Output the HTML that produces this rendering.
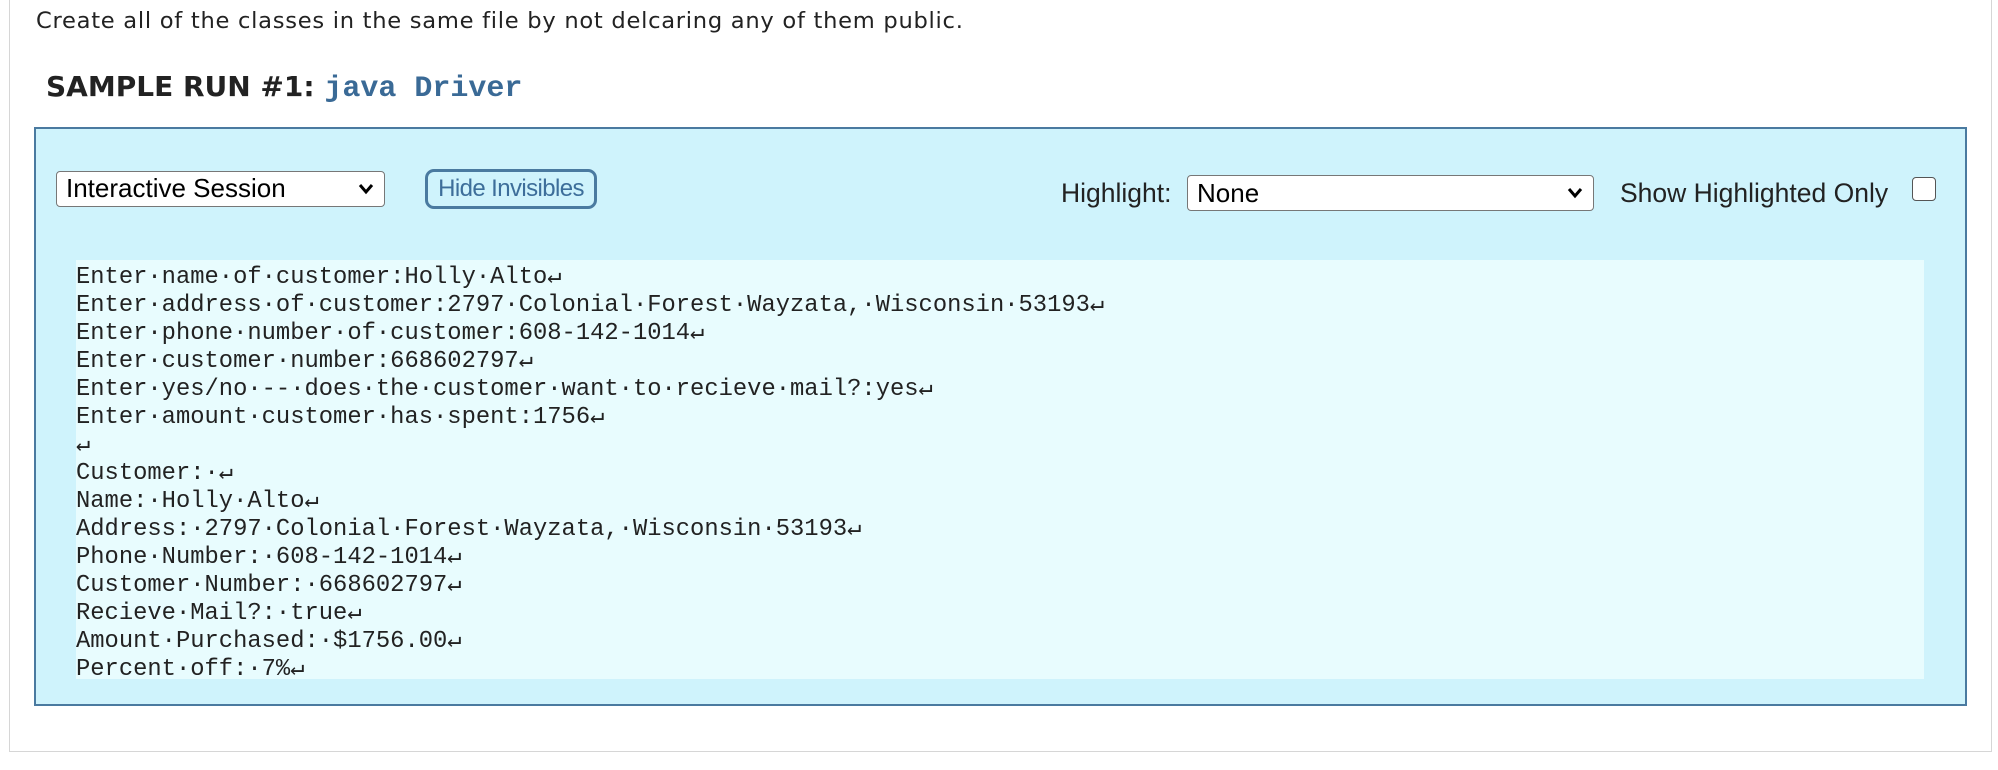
<!DOCTYPE html>
<html><head><meta charset="utf-8"><style>
html,body{margin:0;padding:0;background:#fff;width:1998px;height:770px;overflow:hidden}
.card{position:absolute;left:9px;top:-2px;width:1981px;height:753px;border:1px solid #d6d6d6;border-top:none}
.t1{position:absolute;left:36px;top:8px;font:22.6px "DejaVu Sans",sans-serif;color:#222;letter-spacing:0.72px;white-space:nowrap}
.t2{position:absolute;left:46px;top:70px;font:bold 28px "DejaVu Sans",sans-serif;color:#222;white-space:nowrap}
.t2 code{font:bold 30px "Liberation Mono",monospace;color:#3a6a96}
.box{position:absolute;left:34px;top:127px;width:1929px;height:575px;background:#cff3fc;border:2px solid #4a7aa0}
.sel{position:absolute;background:#fff;border:1.5px solid #777;border-radius:4px;box-sizing:border-box;font:26px "Liberation Sans",sans-serif;color:#000;padding-left:9px;white-space:nowrap}
.sel svg{position:absolute;right:10px;top:50%;margin-top:-7px}
.btn{position:absolute;left:425px;top:169px;width:172px;height:40px;box-sizing:border-box;border:3px solid #4a7aa0;border-radius:9px;font:24px "Liberation Sans",sans-serif;color:#3d6e9a;text-align:center;line-height:33px;background:#cff3fc;letter-spacing:-0.6px;white-space:nowrap}
.lbl{position:absolute;font:26.5px "Liberation Sans",sans-serif;color:#222;white-space:nowrap}
.cb{position:absolute;left:1912px;top:177px;width:24px;height:24px;box-sizing:border-box;border:1.5px solid #555;border-radius:4px;background:#fff}
.code{position:absolute;left:76px;top:260px;width:1848px;height:419px;background:#e8fcfe;margin:0;font:23.8px "Liberation Mono",monospace;line-height:28px;color:#222;padding-top:4px;box-sizing:border-box;white-space:pre}
</style></head><body>
<div class="card"></div>
<div class="t1">Create all of the classes in the same file by not delcaring any of them public.</div>
<div class="t2">SAMPLE RUN #1: <code>java Driver</code></div>
<div class="box"></div>
<div class="sel" style="left:56px;top:171px;width:329px;height:36px;line-height:33px">Interactive Session<svg width="16" height="14" viewBox="0 0 16 14"><path d="M2 3 L8 10 L14 3" stroke="#000" stroke-width="3" fill="none"/></svg></div>
<div class="btn">Hide Invisibles</div>
<div class="lbl" style="left:1061px;top:178px">Highlight:</div>
<div class="sel" style="left:1187px;top:175px;width:407px;height:36px;line-height:34px">None<svg width="16" height="14" viewBox="0 0 16 14"><path d="M2 3 L8 10 L14 3" stroke="#000" stroke-width="3" fill="none"/></svg></div>
<div class="lbl" style="left:1620px;top:178px">Show Highlighted Only</div>
<div class="cb"></div>
<pre class="code">Enter·name·of·customer:Holly·Alto↵
Enter·address·of·customer:2797·Colonial·Forest·Wayzata,·Wisconsin·53193↵
Enter·phone·number·of·customer:608-142-1014↵
Enter·customer·number:668602797↵
Enter·yes/no·--·does·the·customer·want·to·recieve·mail?:yes↵
Enter·amount·customer·has·spent:1756↵
↵
Customer:·↵
Name:·Holly·Alto↵
Address:·2797·Colonial·Forest·Wayzata,·Wisconsin·53193↵
Phone·Number:·608-142-1014↵
Customer·Number:·668602797↵
Recieve·Mail?:·true↵
Amount·Purchased:·$1756.00↵
Percent·off:·7%↵</pre>
</body></html>
